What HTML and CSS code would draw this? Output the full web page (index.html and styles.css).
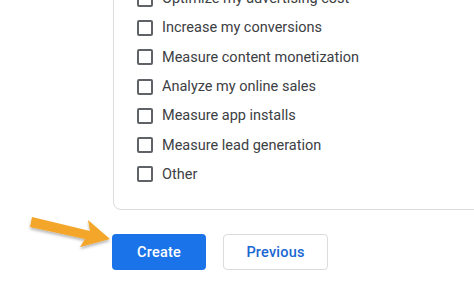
FILE: index.html
```
<!DOCTYPE html>
<html>
<head>
<meta charset="utf-8">
<link rel="stylesheet" href="styles.css">
</head>
<body>
<div class="page">
  <div class="card">
    <label class="row"><span class="box"></span><span class="label">Optimize my advertising cost</span></label>
    <label class="row"><span class="box"></span><span class="label">Increase my conversions</span></label>
    <label class="row"><span class="box"></span><span class="label">Measure content monetization</span></label>
    <label class="row"><span class="box"></span><span class="label">Analyze my online sales</span></label>
    <label class="row"><span class="box"></span><span class="label">Measure app installs</span></label>
    <label class="row"><span class="box"></span><span class="label">Measure lead generation</span></label>
    <label class="row"><span class="box"></span><span class="label">Other</span></label>
  </div>
  <div class="actions">
    <button class="btn primary">Create</button>
    <button class="btn secondary">Previous</button>
  </div>
  <svg class="arrow" width="90" height="45" viewBox="0 0 90 45">
    <defs>
      <filter id="sh" x="-20%" y="-20%" width="140%" height="160%">
        <feDropShadow dx="0" dy="2" stdDeviation="1.5" flood-color="#000" flood-opacity="0.3"/>
      </filter>
    </defs>
    <path filter="url(#sh)" fill="#f4a62a" d="M5 7 L63 21 L61 10 L83 29 L53 37 L58 29 L3 17 Z"/>
  </svg>
</div>
</body>
</html>
```
FILE: styles.css
```
html, body {
  margin: 0;
  padding: 0;
  background: #fff;
  overflow: hidden;
}
.page {
  position: relative;
  width: 474px;
  height: 292px;
  overflow: hidden;
  font-family: Roboto, "Liberation Sans", sans-serif;
}
.card {
  margin-top: -31px;
  margin-left: 113px;
  width: 420px;
  border: 1px solid #dadce0;
  border-radius: 8px;
  padding: 14px 0 20px 23px;
  display: flex;
  flex-direction: column;
}
.row {
  height: 29.3px;
  display: flex;
  align-items: center;
  gap: 9px;
  color: #3c4043;
  font-size: 14.5px;
}
.box {
  width: 12px;
  height: 12px;
  border: 2px solid #5f6368;
  border-radius: 2px;
  flex: none;
}
.actions {
  display: flex;
  gap: 17px;
  margin-top: 24px;
  margin-left: 112px;
}
.btn {
  height: 36px;
  border-radius: 4px;
  font-family: Roboto, "Liberation Sans", sans-serif;
  font-size: 14.5px;
  font-weight: 500;
  letter-spacing: 0.2px;
  cursor: pointer;
}
.primary {
  width: 94px;
  background: #1a73e8;
  color: #fff;
  border: none;
}
.secondary {
  width: 105px;
  background: #fff;
  color: #1a67d2;
  border: 1px solid #dadce0;
}
.arrow {
  position: absolute;
  left: 27px;
  top: 210px;
}
```
